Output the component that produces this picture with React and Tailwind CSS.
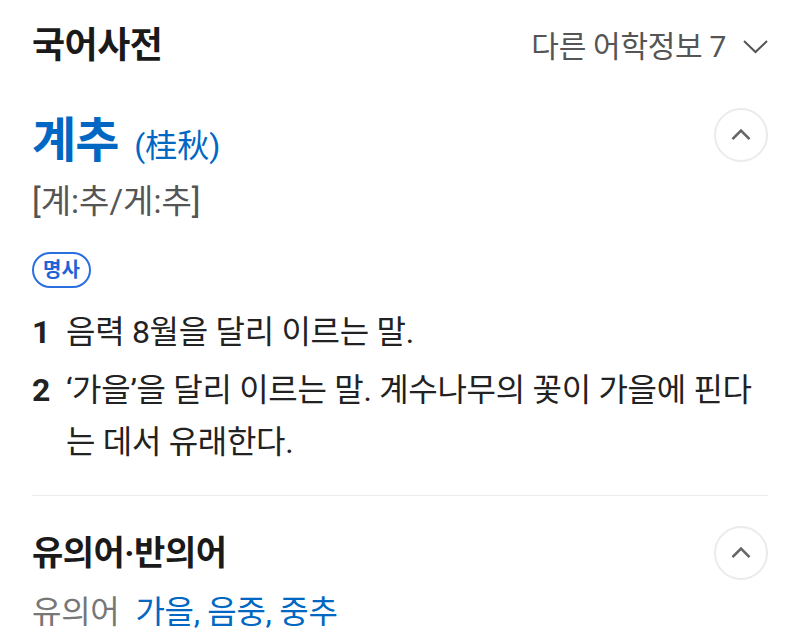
import React from 'react';

const font = { fontFamily: "Roboto, 'Noto Sans CJK KR', sans-serif" };

function ChevronUp() {
  return (
    <svg width="26" height="26" viewBox="0 0 24 24" fill="none" stroke="#666" strokeWidth="2.4" strokeLinecap="square">
      <path d="M5 15 L12 8 L19 15" />
    </svg>
  );
}

function CircleButton() {
  return (
    <button className="w-[54px] h-[54px] rounded-full border-2 border-[#ebebeb] flex items-center justify-center bg-white shrink-0">
      <ChevronUp />
    </button>
  );
}

export default function App() {
  return (
    <div className="w-[800px] h-[636px] bg-white overflow-hidden px-8" style={font}>
      {/* Header */}
      <div className="flex items-center justify-between h-[92px]">
        <h1 className="text-[36px] font-bold text-[#1a1a1a] tracking-[-0.5px]">국어사전</h1>
        <div className="flex items-center gap-[17px] text-[30px] text-[#555] tracking-[-0.3px]">
          <span>다른 어학정보 7</span>
          <svg width="25" height="16" viewBox="0 0 25 16" fill="none" stroke="#555" strokeWidth="2">
            <path d="M1 3 L12.5 14 L24 3" />
          </svg>
        </div>
      </div>

      {/* Entry */}
      <div className="flex items-start justify-between pt-[16px]">
        <div className="flex items-baseline gap-4 mt-[4px]">
          <span className="text-[48px] font-bold text-[#0068c3] tracking-[-1px] leading-[58px]">계추</span>
          <span className="text-[32px] text-[#0068c3]">(桂秋)</span>
        </div>
        <CircleButton />
      </div>
      <div className="text-[33px] text-[#555] leading-[44px] mt-[10px]">[계:추/게:추]</div>

      <div className="mt-[28px]">
        <span className="inline-flex items-center h-[36px] px-[9px] rounded-full border-2 border-[#2a6fe0] text-[#1f63d6] text-[20px] font-bold">명사</span>
      </div>

      <ol className="mt-[18px] text-[32px] text-[#222] tracking-[-0.3px] leading-[52px]">
        <li className="flex">
          <span className="w-[34px] font-bold shrink-0">1</span>
          <span>음력 8월을 달리 이르는 말.</span>
        </li>
        <li className="flex mt-[6px]">
          <span className="w-[34px] font-bold shrink-0">2</span>
          <span>‘가을’을 달리 이르는 말. 계수나무의 꽃이 가을에 핀다는 데서 유래한다.</span>
        </li>
      </ol>

      <div className="border-t border-[#ececec] mt-[27px]" />

      <div className="flex items-center justify-between pt-[30px]">
        <h2 className="text-[34px] font-bold text-[#1a1a1a] tracking-[-0.5px]">유의어·반의어</h2>
        <CircleButton />
      </div>
      <div className="text-[32px] tracking-[-0.3px] leading-[44px] mt-[10px]">
        <span className="text-[#777] mr-4">유의어</span>
        <span className="text-[#0068c3]">가을, 음중, 중추</span>
      </div>
    </div>
  );
}
